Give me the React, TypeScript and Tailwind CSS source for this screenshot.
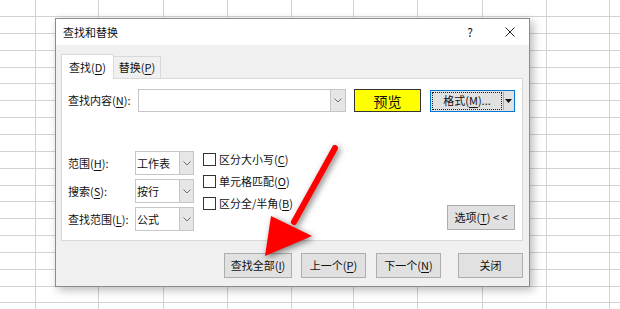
import React from 'react';

const COLW = ['w-[36px]', 'w-[63px]', 'w-[65px]', 'w-[64px]', 'w-[64px]', 'w-[62px]', 'w-[64px]', 'w-[65px]', 'w-[64px]', 'w-[63px]', 'w-[64px]'];
const ROWH = ['h-[17px]', 'h-[17px]', 'h-[17px]', 'h-[17px]', 'h-[16px]', 'h-[17px]', 'h-[17px]', 'h-[17px]', 'h-[17px]', 'h-[17px]', 'h-[17px]', 'h-[16px]', 'h-[17px]', 'h-[17px]', 'h-[17px]', 'h-[17px]', 'h-[17px]', 'h-[16px]', 'h-[17px]'];

const U = ({ c }: { c: string }) => <span className="underline underline-offset-[2px] decoration-[1px]">{c}</span>;

const Chevron = () => (
  <svg width="8" height="5" viewBox="0 0 8 5" className="block">
    <polyline points="0.5,0.5 4,4 7.5,0.5" fill="none" stroke="#6e6e6e" strokeWidth="1" />
  </svg>
);

const Select = ({ text }: { text: string }) => (
  <div className="flex h-[24px] w-[59px] border border-[#c6c6c6] bg-white">
    <div className="flex flex-1 items-center pl-[1px] text-[11px] leading-none">{text}</div>
    <div className="flex w-[14px] items-center justify-center border-l border-[#c6c6c6] bg-[#e6e6e6]">
      <Chevron />
    </div>
  </div>
);

const Check = ({ children }: { children: React.ReactNode }) => (
  <div className="flex h-[22px] items-center">
    <div className="h-[13px] w-[13px] border border-[#333] bg-white" />
    <div className="ml-[3px] text-[11px] leading-none">{children}</div>
  </div>
);

const Btn = ({ w, children }: { w: string; children: React.ReactNode }) => (
  <div className={`flex h-[25px] ${w} items-center justify-center border border-[#adadad] bg-[#e1e1e1] text-[11px] leading-none`}>
    {children}
  </div>
);

export default function App() {
  return (
    <div className="relative h-[309px] w-[620px] overflow-hidden bg-white font-['Noto_Sans_CJK_SC','Noto_Sans',sans-serif] text-[#111]">
      {/* spreadsheet grid */}
      <div className="flex flex-col">
        {ROWH.map((h, r) => (
          <div key={r} className="flex">
            {COLW.map((w, c) => (
              <div key={c} className={`${w} ${h} shrink-0 border-b border-r border-[#d3d3d3]`} />
            ))}
          </div>
        ))}
      </div>

      {/* dialog */}
      <div className="absolute left-[55px] top-[18px] flex h-[269px] w-[475px] flex-col border border-[#8c8c8c] bg-[#f0f0f0] shadow-[3px_3px_9px_rgba(0,0,0,0.28)]">
        {/* title bar */}
        <div className="flex h-[26px] items-center bg-white pl-[7px] pr-[14px]">
          <div className="flex-1 text-[11px] leading-none">查找和替换</div>
          <div className="text-[12px] leading-none">?</div>
          <div className="ml-[32px]">
            <svg width="10" height="10" viewBox="0 0 10 10" className="block">
              <path d="M0.5 0.5 L9.5 9.5 M9.5 0.5 L0.5 9.5" stroke="#222" strokeWidth="1" />
            </svg>
          </div>
        </div>

        {/* body */}
        <div className="flex flex-1 flex-col px-[5px] pt-[9px]">
          {/* tabs */}
          <div className="flex items-end">
            <div className="relative z-10 -mb-px flex h-[25px] w-[53px] items-center justify-center border border-b-0 border-[#d9d9d9] bg-white text-[11px] leading-none">
              查找(<U c="D" />)
            </div>
            <div className="flex h-[22px] w-[47px] items-center justify-center border border-b-0 border-l-0 border-[#d9d9d9] bg-[#f0f0f0] text-[11px] leading-none">
              替换(<U c="P" />)
            </div>
          </div>

          {/* panel */}
          <div className="flex h-[163px] w-[462px] flex-col border border-[#d9d9d9] bg-white pl-[6px] pr-[7px] pt-[10px] pb-[9px]">
            <div className="flex h-[23px] items-center">
              <div className="w-[70px] text-[11px] leading-none">
                查找内容(<U c="N" />):
              </div>
              <div className="flex h-[23px] w-[208px] border border-[#c6c6c6] bg-white">
                <div className="flex-1" />
                <div className="flex w-[15px] items-center justify-center border-l border-[#c6c6c6] bg-[#e6e6e6]">
                  <Chevron />
                </div>
              </div>
              <div className="ml-[8px] flex h-[23px] w-[67px] items-center justify-center border border-[#333] bg-[#ffff00] text-[14px] leading-none">
                预览
              </div>
              <div className="ml-[9px] flex h-[22px] w-[85px] border border-[#0078d7] bg-[#e1e1e1] p-[1px]">
                <div className="flex flex-1 items-center justify-center border border-dotted border-[#222] text-[11px] leading-none">
                  格式(<U c="M" />)...
                </div>
                <div className="ml-[1px] flex w-[10px] items-center justify-center border-l border-[#adadad]">
                  <svg width="7" height="4" viewBox="0 0 7 4" className="block">
                    <polygon points="0,0 7,0 3.5,4" fill="#111" />
                  </svg>
                </div>
              </div>
            </div>

            <div className="flex-1" />

            <div className="flex items-end">
              <div className="flex flex-col gap-[4px]">
                <div className="flex items-center">
                  <div className="w-[67px] text-[11px] leading-none">范围(<U c="H" />):</div>
                  <Select text="工作表" />
                </div>
                <div className="flex items-center">
                  <div className="w-[67px] text-[11px] leading-none">搜索(<U c="S" />):</div>
                  <Select text="按行" />
                </div>
                <div className="flex items-center">
                  <div className="w-[67px] text-[11px] leading-none">查找范围(<U c="L" />):</div>
                  <Select text="公式" />
                </div>
              </div>
              <div className="ml-[9px] mb-[17px] flex flex-col self-end">
                <Check>区分大小写(<U c="C" />)</Check>
                <Check>单元格匹配(<U c="O" />)</Check>
                <Check>区分全/半角(<U c="B" />)</Check>
              </div>
              <div className="flex-1" />
              <div className="mb-[1px] flex h-[25px] w-[68px] items-center justify-center border border-[#adadad] bg-[#e1e1e1] text-[11px] leading-none">
                选项(<U c="T" />)&nbsp;&lt;&nbsp;&lt;
              </div>
            </div>
          </div>

          {/* bottom buttons */}
          <div className="flex w-[462px] justify-end pt-[12px]">
            <Btn w="w-[68px]">查找全部(<U c="I" />)</Btn>
            <div className="ml-[9px]">
              <Btn w="w-[65px]">上一个(<U c="P" />)</Btn>
            </div>
            <div className="ml-[10px]">
              <Btn w="w-[65px]">下一个(<U c="N" />)</Btn>
            </div>
            <div className="ml-[17px]">
              <Btn w="w-[65px]">关闭</Btn>
            </div>
          </div>
        </div>
      </div>

      {/* red arrow */}
      <svg
        className="pointer-events-none absolute left-0 top-0 drop-shadow-[2px_2px_3px_rgba(0,0,0,0.5)]"
        width="620"
        height="309"
        viewBox="0 0 620 309"
      >
        <line x1="335" y1="148" x2="294" y2="222" stroke="#ff0000" strokeWidth="6" strokeLinecap="round" />
        <polygon points="265,256 271,216 312,236" fill="#ff0000" />
      </svg>
    </div>
  );
}
